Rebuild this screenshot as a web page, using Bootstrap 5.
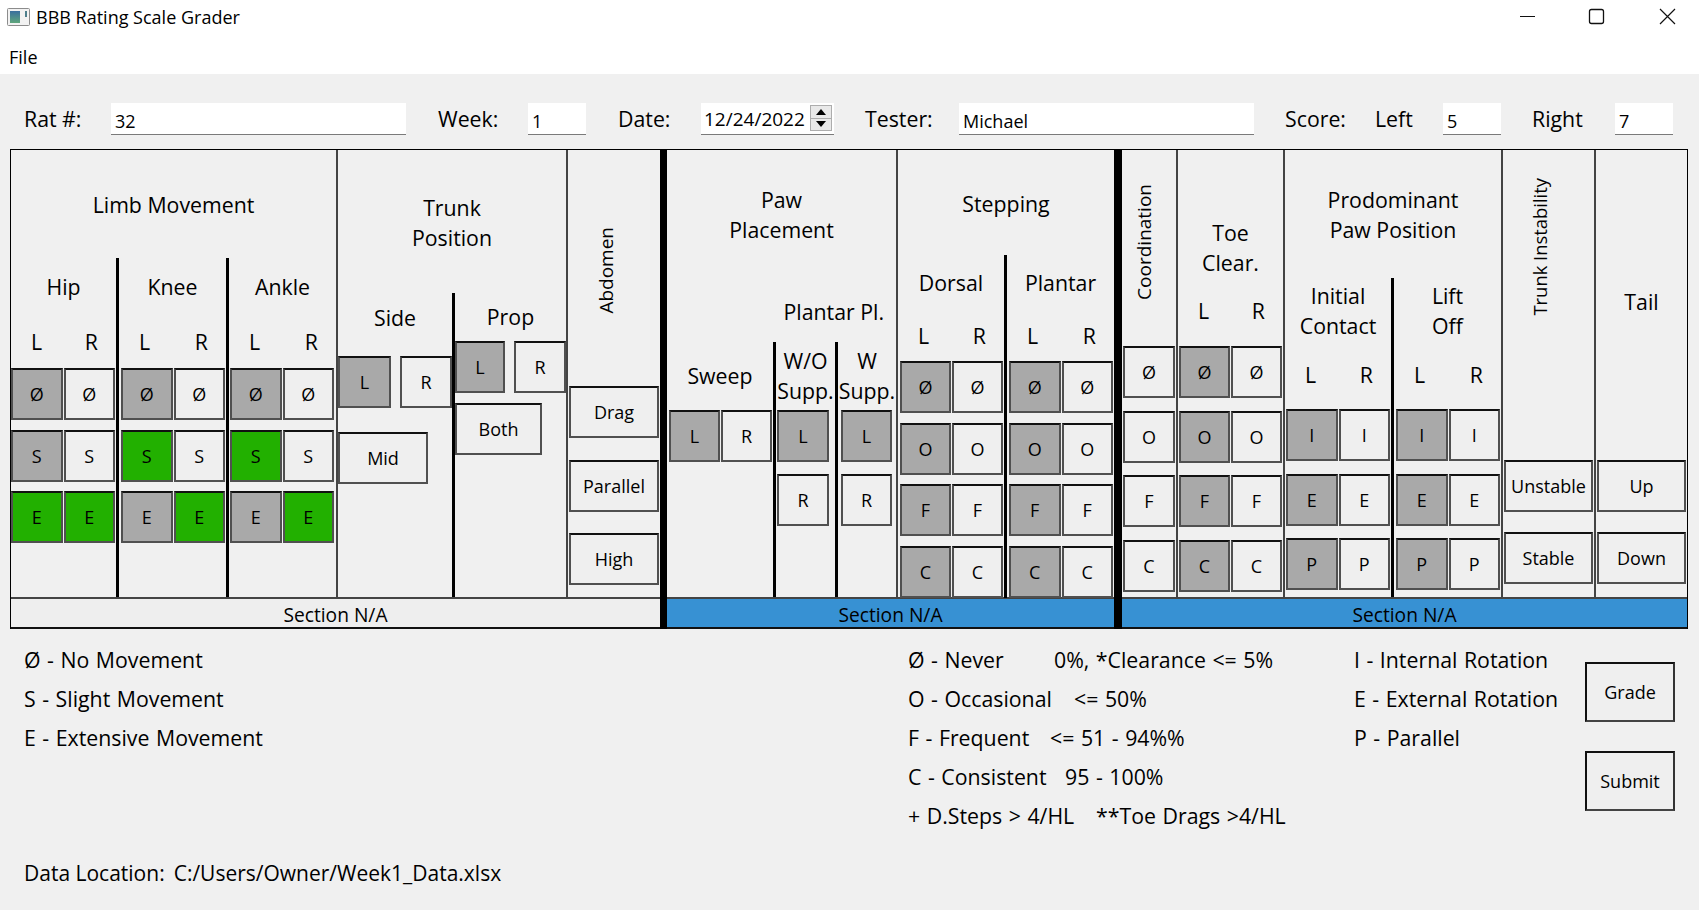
<!DOCTYPE html>
<html lang="en">
<head>
    <meta charset="UTF-8">
    <meta name="viewport" content="width=device-width, initial-scale=1.0">
    <title>BBB Rating Scale Grader</title>
    <link href="https://cdn.jsdelivr.net/npm/bootstrap@5.3.0/dist/css/bootstrap.min.css" rel="stylesheet">
    <style>
        html, body { height: 100%; }
        body { background: #f0f0f0; color: #000; font-family: "Open Sans", "Liberation Sans", sans-serif; font-size: 21.3px; line-height: 1.2; overflow: hidden; }

        /* window chrome */
        .win-title { height: 34px; background: #fff; font-size: 18px; padding: 2px 0 0 7px; }
        .app-ico { margin: -2px 6px 0 0; }
        .win-ctl { margin: -2px 0 0 auto; }
        .win-menu { height: 40px; background: #fff; font-size: 18px; padding: 13px 0 0 9px; }

        /* top form row */
        .form-strip { height: 75px; padding: 29px 0 0 24px; }
        .form-strip .lbl { flex: none; padding-top: 3px; }
        .lw-87 { width: 87px; } .lw-90 { width: 90px; } .lw-83 { width: 83px; } .lw-94 { width: 94px; } .lw-68 { width: 68px; } .lw-83b { width: 83px; }
        .ms-32 { margin-left: 32px; } .ms-31 { margin-left: 31px; }
        .fld.form-control { flex: none; height: 32px; padding: 4px 4px 0; border: 0; border-bottom: 1px solid #7a7a7a; border-radius: 0; background: #fff; font-size: 18px; line-height: 1.2; color: #000; }
        .fld.fw-295 { width: 295px; } .fld.fw-58 { width: 58px; } .fld.fw-133 { width: 133px; }
        .fld.date-fld { font-size: 19px; padding-top: 5px; padding-left: 3px; }
        .spin { width: 22px; height: 26px; margin: -3px -2px 0 auto; border: 1px solid #adadad; background: #e9e9e9; }
        .spin span { display: flex; flex: 1; align-items: center; justify-content: center; }
        .spin span + span { border-top: 1px solid #adadad; }

        /* grader table */
        .grader { margin-left: 10px; width: 1678px; height: 480px; }
        .grp { border-top: 1px solid #000; }
        .grp-a { width: 650px; border-left: 1px solid #000; }
        .grp-b { width: 447px; }
        .grp-c { width: 566px; border-right: 1px solid #000; }
        .thick { width: 8px; background: #000; flex: none; }
        .thick-a { width: 7px; }
        .cols { height: 449px; border-bottom: 2px solid #444; }
        .sect { height: 30px; padding-top: 3px; border-bottom: 2px solid #111; font-size: 19.2px; background: #eee; }
        .sect-on { background: #3791d3; }
        .col-box { flex: none; display: flex; flex-direction: column; border-right: 2px solid #444; }
        .col-box:last-child { border-right: 0; }
        .sub { flex: none; border-right: 3px solid #000; }
        .sub:last-child { border-right: 0; }
        .cen { display: flex; flex: none; align-items: center; justify-content: center; text-align: center; }
        .two { line-height: 30px; }
        .hd1 { padding-top: 2px; }
        .hd2 { padding-top: 2px; }
        .lr { display: flex; flex: none; justify-content: space-between; align-items: center; padding: 0 18px 0 20px; }
        .vert { writing-mode: vertical-rl; transform: rotate(180deg); white-space: nowrap; font-size: 19px; }
        .vert-sm { font-size: 18.4px; }

        .gb.btn { flex: none; display: flex; align-items: center; justify-content: center; padding: 0; border: 2px solid; border-color: #111 #505050 #505050 #505050; border-radius: 0; background: #efefef; color: #000; font-size: 18px; line-height: 1; height: 52px; }
        .gb.sel { background: #a9a9a9; }
        .gb.ok { background: #22b000; }
        .pair { display: flex; flex: none; gap: 1px; }
        .pair .gb { flex: 1 1 0; min-width: 0; }

        /* column widths */
        .w-limb { width: 327px; } .w-trunk { width: 230px; } .w-abd { width: 92px; }
        .w-paw { width: 231px; } .w-step { width: 216px; }
        .w-coord { width: 56px; } .w-toe { width: 107px; } .w-prod { width: 218px; } .w-inst { width: 93px; } .w-tail { width: 91px; }
        .w-hip { width: 108px; } .w-knee { width: 110px; } .w-ankle { width: 107px; }
        .w-side { width: 117px; } .w-prop { width: 111px; }
        .w-sweep { width: 109px; } .w-wo { width: 62px; } .w-ws { width: 58px; }
        .w-dors { width: 109px; } .w-plan { width: 107px; }
        .w-init { width: 109px; } .w-lift { width: 107px; }

        /* block heights */
        .bh-108 { height: 108px; } .bh-58 { height: 58px; } .bh-52 { height: 52px; }
        .bh-143 { height: 143px; } .bh-50 { height: 50px; } .bh-48 { height: 48px; }
        .bh-105 { height: 105px; } .bh-56 { height: 56px; } .bh-68 { height: 68px; }
        .bh-127 { height: 127px; } .bh-65 { height: 65px; } .bh-128 { height: 128px; }
        .bh-196 { height: 196px; } .bh-236 { height: 236px; } .bh-310 { height: 310px; }

        /* one-off header offsets */
        .abd-t { padding: 4px 16px 0 0; }
        .coord-t { padding: 0 10px 13px 0; }
        .inst-t { padding: 0 16px 117px 0; }
        .tail-t { padding-bottom: 7px; }
        .pl-t { justify-content: flex-end; padding: 4px 12px 0 0; }
        .toe-t { height: 136px; padding-top: 59px; }
        .toe-lr { height: 60px; padding-bottom: 10px; }
        .prod-t { height: 66px; }
        .prod-lr { height: 65px; padding-bottom: 3px; }

        /* stacks of buttons */
        .stk { display: flex; flex-direction: column; }
        .gap-limb { gap: 9.5px; }
        .gap-toe { gap: 12.5px; }
        .gap-abd { gap: 21.5px; }
        .gap-unst { gap: 20px; }
        .gap-supp { gap: 12px; }
        .pad-a { padding: 0 1px 0 0; }
        .pad-b { padding: 0 1px 0 2px; }
        .pad-c { padding: 0 2px 0 1px; }
        .pad-d { padding: 0 1px; }
        .pad-e { padding: 0 6px 0 1px; }
        .pad-f { padding: 0 4px 0 3px; }

        /* trunk position buttons */
        .bw-53 { width: 53px; } .bw-52 { width: 52px; } .bw-50 { width: 50px; } .bw-90 { width: 90px; } .bw-87 { width: 87px; }
        .tr-gap { gap: 9px; }
        .tr-side { padding-top: 13px; }
        .tr-mid { margin-top: 24px; }
        .tr-both { margin-top: 10px; }

        /* legend */
        .legend { padding: 11px 0 0 24px; word-spacing: 1px; }
        .leg-row { height: 39px; display: flex; align-items: center; white-space: nowrap; }
        .leg-row span:first-child { flex: none; }
        .leg-1 { width: 884px; } .leg-2 { width: 446px; } .leg-3 { width: 231px; }
        .lw-146 { width: 146px; } .lw-166 { width: 166px; } .lw-142 { width: 142px; } .lw-157 { width: 157px; } .lw-188 { width: 188px; }
        .act-col { display: flex; flex-direction: column; padding-top: 22px; }
        .act.btn { width: 90px; height: 60px; padding: 0; border: 2px solid; border-color: #111 #333 #444 #111; border-radius: 0; background: #efefef; color: #000; font-size: 18px; }
        .act + .act { margin-top: 29px; }
        .data-loc { padding: 26px 0 0 24px; font-size: 21px; }
        .data-loc span { margin-left: 9px; }
    </style>
</head>
<body>

    <!-- Window chrome -->
    <div class="win-title d-flex align-items-center">
        <svg class="app-ico" width="23" height="18" viewBox="0 0 23 18">
            <defs>
                <linearGradient id="icoFill" x1="0" y1="0" x2="0" y2="1">
                    <stop offset="0" stop-color="#3a6f9e"/>
                    <stop offset="1" stop-color="#5fa67c"/>
                </linearGradient>
            </defs>
            <rect x=".5" y=".5" width="22" height="17" rx="1" fill="#f2f2f2" stroke="#8c8c8c"/>
            <rect x="3" y="3" width="10" height="12" fill="url(#icoFill)"/>
            <rect x="18" y="3" width="2" height="6" fill="#4d7f8c"/>
        </svg>
        <span>BBB Rating Scale Grader</span>
        <svg class="win-ctl" width="179" height="34" viewBox="0 0 179 34" fill="none" stroke="#111">
            <path d="M0 16.5H15"/>
            <rect x="69.5" y="9.5" width="14" height="14" rx="2" stroke-width="1.3"/>
            <path d="M140 9 155 24M155 9 140 24" stroke-width="1.2"/>
        </svg>
    </div>
    <div class="win-menu">File</div>

    <!-- Header fields -->
    <div class="form-strip d-flex">
        <div class="lbl lw-87">Rat #:</div>
        <input class="fld form-control fw-295" value="32">
        <div class="lbl ms-32 lw-90">Week:</div>
        <input class="fld form-control fw-58" value="1">
        <div class="lbl ms-32 lw-83">Date:</div>
        <div class="fld date-fld form-control fw-133 d-flex">
            <span>12/24/2022</span>
            <div class="spin d-flex flex-column">
                <span><svg width="10" height="6" viewBox="0 0 10 6"><path d="M5 0 10 6H0Z"/></svg></span>
                <span><svg width="10" height="6" viewBox="0 0 10 6"><path d="M0 0H10L5 6Z"/></svg></span>
            </div>
        </div>
        <div class="lbl ms-31 lw-94">Tester:</div>
        <input class="fld form-control fw-295" value="Michael">
        <div class="lbl ms-31 lw-90">Score:</div>
        <div class="lbl lw-68">Left</div>
        <input class="fld form-control fw-58" value="5">
        <div class="lbl ms-31 lw-83b">Right</div>
        <input class="fld form-control fw-58" value="7">
    </div>

    <!-- Grader -->
    <div class="grader d-flex">

        <!-- Group A -->
        <div class="grp grp-a">
            <div class="cols d-flex">
                <div class="col-box w-limb">
                    <div class="cen hd1 bh-108">Limb Movement</div>
                    <div class="d-flex flex-grow-1">
                        <div class="sub w-hip">
                            <div class="cen bh-58">Hip</div>
                            <div class="lr bh-52"><span>L</span><span>R</span></div>
                            <div class="stk gap-limb pad-a">
                                <div class="pair"><button class="btn gb sel">Ø</button><button class="btn gb">Ø</button></div>
                                <div class="pair"><button class="btn gb sel">S</button><button class="btn gb">S</button></div>
                                <div class="pair"><button class="btn gb ok">E</button><button class="btn gb ok">E</button></div>
                            </div>
                        </div>
                        <div class="sub w-knee">
                            <div class="cen bh-58">Knee</div>
                            <div class="lr bh-52"><span>L</span><span>R</span></div>
                            <div class="stk gap-limb pad-b">
                                <div class="pair"><button class="btn gb sel">Ø</button><button class="btn gb">Ø</button></div>
                                <div class="pair"><button class="btn gb ok">S</button><button class="btn gb">S</button></div>
                                <div class="pair"><button class="btn gb sel">E</button><button class="btn gb ok">E</button></div>
                            </div>
                        </div>
                        <div class="sub w-ankle">
                            <div class="cen bh-58">Ankle</div>
                            <div class="lr bh-52"><span>L</span><span>R</span></div>
                            <div class="stk gap-limb pad-c">
                                <div class="pair"><button class="btn gb sel">Ø</button><button class="btn gb">Ø</button></div>
                                <div class="pair"><button class="btn gb ok">S</button><button class="btn gb">S</button></div>
                                <div class="pair"><button class="btn gb sel">E</button><button class="btn gb ok">E</button></div>
                            </div>
                        </div>
                    </div>
                </div>
                <div class="col-box w-trunk">
                    <div class="cen two hd2 bh-143">Trunk<br>Position</div>
                    <div class="d-flex flex-grow-1">
                        <div class="sub w-side">
                            <div class="cen bh-50">Side</div>
                            <div class="d-flex tr-gap tr-side">
                                <button class="btn gb sel bw-53">L</button>
                                <button class="btn gb bw-52">R</button>
                            </div>
                            <button class="btn gb bw-90 tr-mid">Mid</button>
                        </div>
                        <div class="sub w-prop">
                            <div class="cen bh-48">Prop</div>
                            <div class="d-flex tr-gap">
                                <button class="btn gb sel bw-50">L</button>
                                <button class="btn gb bw-52">R</button>
                            </div>
                            <button class="btn gb bw-87 tr-both">Both</button>
                        </div>
                    </div>
                </div>
                <div class="col-box w-abd">
                    <div class="cen bh-236 abd-t">
                        <div class="vert">Abdomen</div>
                    </div>
                    <div class="stk gap-abd pad-d">
                        <button class="btn gb">Drag</button>
                        <button class="btn gb">Parallel</button>
                        <button class="btn gb">High</button>
                    </div>
                </div>
            </div>
            <div class="sect cen">Section N/A</div>
        </div>
        <div class="thick thick-a"></div>

        <!-- Group B -->
        <div class="grp grp-b">
            <div class="cols d-flex">
                <div class="col-box w-paw">
                    <div class="cen two hd2 bh-127">Paw<br>Placement</div>
                    <div class="cen bh-65 pl-t">Plantar Pl.</div>
                    <div class="d-flex flex-grow-1">
                        <div class="sub w-sweep">
                            <div class="cen bh-68">Sweep</div>
                            <div class="pair pad-b"><button class="btn gb sel">L</button><button class="btn gb">R</button></div>
                        </div>
                        <div class="sub w-wo">
                            <div class="cen two bh-68">W/O<br>Supp.</div>
                            <div class="stk gap-supp pad-e">
                                <button class="btn gb sel">L</button>
                                <button class="btn gb">R</button>
                            </div>
                        </div>
                        <div class="sub w-ws">
                            <div class="cen two bh-68">W<br>Supp.</div>
                            <div class="stk gap-supp pad-f">
                                <button class="btn gb sel">L</button>
                                <button class="btn gb">R</button>
                            </div>
                        </div>
                    </div>
                </div>
                <div class="col-box w-step">
                    <div class="cen hd1 bh-105">Stepping</div>
                    <div class="d-flex flex-grow-1">
                        <div class="sub w-dors">
                            <div class="cen bh-56">Dorsal</div>
                            <div class="lr bh-50"><span>L</span><span>R</span></div>
                            <div class="stk gap-limb pad-b">
                                <div class="pair"><button class="btn gb sel">Ø</button><button class="btn gb">Ø</button></div>
                                <div class="pair"><button class="btn gb sel">O</button><button class="btn gb">O</button></div>
                                <div class="pair"><button class="btn gb sel">F</button><button class="btn gb">F</button></div>
                                <div class="pair"><button class="btn gb sel">C</button><button class="btn gb">C</button></div>
                            </div>
                        </div>
                        <div class="sub w-plan">
                            <div class="cen bh-56">Plantar</div>
                            <div class="lr bh-50"><span>L</span><span>R</span></div>
                            <div class="stk gap-limb pad-b">
                                <div class="pair"><button class="btn gb sel">Ø</button><button class="btn gb">Ø</button></div>
                                <div class="pair"><button class="btn gb sel">O</button><button class="btn gb">O</button></div>
                                <div class="pair"><button class="btn gb sel">F</button><button class="btn gb">F</button></div>
                                <div class="pair"><button class="btn gb sel">C</button><button class="btn gb">C</button></div>
                            </div>
                        </div>
                    </div>
                </div>
            </div>
            <div class="sect sect-on cen">Section N/A</div>
        </div>
        <div class="thick"></div>

        <!-- Group C -->
        <div class="grp grp-c">
            <div class="cols d-flex">
                <div class="col-box w-coord">
                    <div class="cen bh-196 coord-t">
                        <div class="vert">Coordination</div>
                    </div>
                    <div class="stk gap-toe pad-d">
                        <button class="btn gb">Ø</button>
                        <button class="btn gb">O</button>
                        <button class="btn gb">F</button>
                        <button class="btn gb">C</button>
                    </div>
                </div>
                <div class="col-box w-toe">
                    <div class="cen two toe-t">Toe<br>Clear.</div>
                    <div class="lr toe-lr"><span>L</span><span>R</span></div>
                    <div class="stk gap-toe pad-d">
                        <div class="pair"><button class="btn gb sel">Ø</button><button class="btn gb">Ø</button></div>
                        <div class="pair"><button class="btn gb sel">O</button><button class="btn gb">O</button></div>
                        <div class="pair"><button class="btn gb sel">F</button><button class="btn gb">F</button></div>
                        <div class="pair"><button class="btn gb sel">C</button><button class="btn gb">C</button></div>
                    </div>
                </div>
                <div class="col-box w-prod">
                    <div class="cen two hd2 bh-128">Prodominant<br>Paw Position</div>
                    <div class="d-flex flex-grow-1">
                        <div class="sub w-init">
                            <div class="cen two prod-t">Initial<br>Contact</div>
                            <div class="lr prod-lr"><span>L</span><span>R</span></div>
                            <div class="stk gap-toe pad-d">
                                <div class="pair"><button class="btn gb sel">I</button><button class="btn gb">I</button></div>
                                <div class="pair"><button class="btn gb sel">E</button><button class="btn gb">E</button></div>
                                <div class="pair"><button class="btn gb sel">P</button><button class="btn gb">P</button></div>
                            </div>
                        </div>
                        <div class="sub w-lift">
                            <div class="cen two prod-t">Lift<br>Off</div>
                            <div class="lr prod-lr"><span>L</span><span>R</span></div>
                            <div class="stk gap-toe pad-b">
                                <div class="pair"><button class="btn gb sel">I</button><button class="btn gb">I</button></div>
                                <div class="pair"><button class="btn gb sel">E</button><button class="btn gb">E</button></div>
                                <div class="pair"><button class="btn gb sel">P</button><button class="btn gb">P</button></div>
                            </div>
                        </div>
                    </div>
                </div>
                <div class="col-box w-inst">
                    <div class="cen bh-310 inst-t">
                        <div class="vert vert-sm">Trunk Instability</div>
                    </div>
                    <div class="stk gap-unst pad-d">
                        <button class="btn gb">Unstable</button>
                        <button class="btn gb">Stable</button>
                    </div>
                </div>
                <div class="col-box w-tail">
                    <div class="cen bh-310 tail-t">Tail</div>
                    <div class="stk gap-unst pad-d">
                        <button class="btn gb">Up</button>
                        <button class="btn gb">Down</button>
                    </div>
                </div>
            </div>
            <div class="sect sect-on cen">Section N/A</div>
        </div>
    </div>

    <!-- Legend -->
    <div class="legend d-flex">
        <div class="leg-1">
            <div class="leg-row">Ø - No Movement</div>
            <div class="leg-row">S - Slight Movement</div>
            <div class="leg-row">E - Extensive Movement</div>
        </div>
        <div class="leg-2">
            <div class="leg-row"><span class="lw-146">Ø - Never</span><span>0%, *Clearance &lt;= 5%</span></div>
            <div class="leg-row"><span class="lw-166">O - Occasional</span><span>&lt;= 50%</span></div>
            <div class="leg-row"><span class="lw-142">F - Frequent</span><span>&lt;= 51 - 94%%</span></div>
            <div class="leg-row"><span class="lw-157">C - Consistent</span><span>95 - 100%</span></div>
            <div class="leg-row"><span class="lw-188">+ D.Steps &gt; 4/HL</span><span>**Toe Drags &gt;4/HL</span></div>
        </div>
        <div class="leg-3">
            <div class="leg-row">I - Internal Rotation</div>
            <div class="leg-row">E - External Rotation</div>
            <div class="leg-row">P - Parallel</div>
        </div>
        <div class="act-col">
            <button class="btn act">Grade</button>
            <button class="btn act">Submit</button>
        </div>
    </div>
    <div class="data-loc">Data Location:<span>C:/Users/Owner/Week1_Data.xlsx</span></div>

    <script src="https://cdn.jsdelivr.net/npm/bootstrap@5.3.0/dist/js/bootstrap.bundle.min.js"></script>
</body>
</html>
